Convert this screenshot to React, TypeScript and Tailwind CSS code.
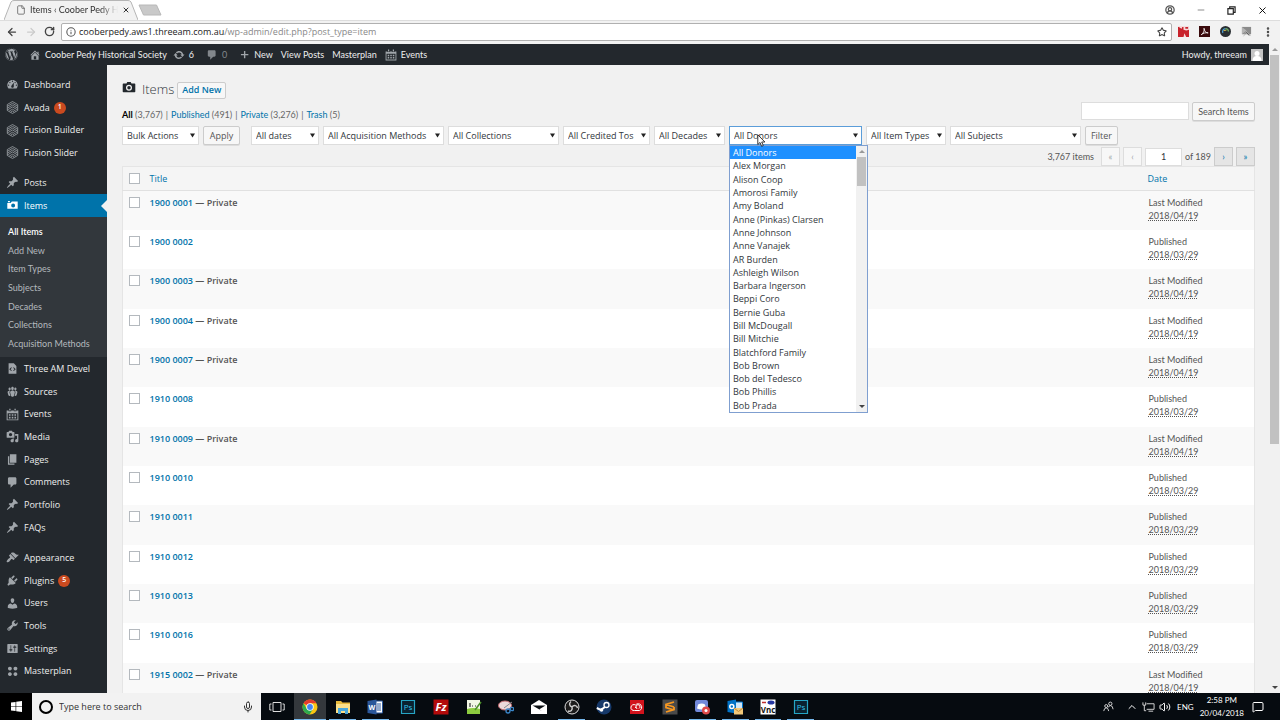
import React from 'react';
import clsx from 'clsx';
import { FaWordpress } from 'react-icons/fa';
import {
  ArrowLeft,
  ArrowRight,
  ChevronUp,
  CircleUserRound,
  File,
  Info,
  MessageSquare,
  Mic,
  Minus,
  MoreVertical,
  RotateCw,
  Star,
  Volume2,
  X,
} from 'lucide-react';

const ICONS = {
  home: 'M16 8.5l1.53 1.53-1.06 1.06L10 4.6l-6.47 6.49-1.06-1.06L10 2.5l4 4v-2h2v4zm-6-2.46l6 5.99V18H4v-5.97zM12 17v-5H8v5h4z',
  update:
    'M10.2 3.28c3.53 0 6.43 2.61 6.92 6h2.08l-3.5 4-3.5-4h2.32c-.45-1.97-2.21-3.45-4.32-3.45-1.45 0-2.73.71-3.54 1.78L4.95 5.66C6.23 4.2 8.11 3.28 10.2 3.28zm-.4 13.44c-3.52 0-6.43-2.61-6.92-6H.8l3.5-4c1.17 1.33 2.33 2.67 3.5 4H5.48c.45 1.97 2.21 3.45 4.32 3.45 1.45 0 2.73-.71 3.54-1.78l1.71 1.95c-1.28 1.46-3.15 2.38-5.25 2.38z',
  comments: 'M5 2h9c1.1 0 2 .9 2 2v7c0 1.1-.9 2-2 2h-2l-5 5v-5H5c-1.1 0-2-.9-2-2V4c0-1.1.9-2 2-2z',
  plus: 'M17 9v2.5h-5.5V17H9v-5.500H3.500V9H9V3.500h2.500V9z',
  calendar:
    'M5 1h2v3H5zM13 1h2v3h-2zM1 4h3v1h4V4h4v1h4V4h3v15H1zM2.500 8v9.500h15V8zM4.500 9.500h2.500V12H4.500zM8.800 9.500h2.500V12H8.800zM13 9.500h2.500V12H13zM4.500 13.500h2.500V16H4.500zM8.800 13.500h2.500V16H8.800zM13 13.500h2.500V16H13z',
  dashboard:
    'M3.76 16h12.48c1.1-1.37 1.76-3.11 1.76-5 0-4.42-3.58-8-8-8s-8 3.58-8 8c0 1.89.66 3.63 1.76 5zM10 4c.55 0 1 .45 1 1s-.45 1-1 1-1-.45-1-1 .45-1 1-1zM6 6c.55 0 1 .45 1 1s-.45 1-1 1-1-.45-1-1 .45-1 1-1zm8 0c.55 0 1 .45 1 1s-.45 1-1 1-1-.45-1-1 .45-1 1-1zm-5.37 5.55L12 7v6c0 1.100-.9 2-2 2s-2-.9-2-2c0-.57.24-1.080.63-1.450zM4 10c.55 0 1 .45 1 1s-.45 1-1 1-1-.45-1-1 .45-1 1-1zm12 0c.55 0 1 .45 1 1s-.45 1-1 1-1-.45-1-1 .45-1 1-1z',
  post: 'M10.44 3.02l1.82-1.82 6.36 6.35-1.83 1.82c-1.05-.68-2.48-.57-3.41.36l-.75.75c-.92.93-1.04 2.35-.35 3.41l-1.83 1.82-2.41-2.41-2.8 2.79c-.42.42-3.38 2.71-3.8 2.29s1.86-3.39 2.28-3.81l2.79-2.79L4.1 9.36l1.83-1.82c1.05.69 2.48.57 3.4-.36l.75-.75c.93-.92 1.05-2.35.36-3.41z',
  camera: 'M6 5V3H3v2h3zm12 10V4H9L7 6H2v9h16zm-7-8c1.650 0 3 1.350 3 3s-1.350 3-3 3-3-1.350-3-3 1.350-3 3-3z',
  dslr: 'M6.500 3.500L7.500 1.500h5l1 2H18a1 1 0 0 1 1 1V15a1 1 0 0 1-1 1H2a1 1 0 0 1-1-1V4.500a1 1 0 0 1 1-1zM10 5.200a4.300 4.300 0 1 0 0 8.600a4.300 4.300 0 1 0 0-8.600zM10 7a2.500 2.500 0 1 1 0 5a2.500 2.500 0 1 1 0-5z',
  code: 'M12 2l4 4v12H4V2h8zM9 13l-2-2 2-2-1-1-3 3 3 3zm3 1l3-3-3-3-1 1 2 2-2 2z',
  groups:
    'M8.03 4.46c-.29 1.28.55 3.46 1.97 3.46 1.41 0 2.25-2.18 1.96-3.46-.22-.98-1.08-1.63-1.96-1.63-.89 0-1.74.65-1.97 1.63zm-4.13.9c-.25 1.08.47 2.93 1.67 2.93s1.92-1.85 1.67-2.93c-.19-.83-.92-1.39-1.67-1.39s-1.48.56-1.67 1.39zm8.86 0c-.25 1.08.47 2.93 1.66 2.93 1.2 0 1.92-1.85 1.67-2.93-.19-.83-.92-1.39-1.67-1.39-.74 0-1.47.56-1.66 1.39zm-.59 11.43l1.25-4.3C14.2 10 12.71 8.47 10 8.47c-2.72 0-4.21 1.53-3.44 4.02l1.26 4.3C8.05 17.51 9 18 10 18c.98 0 1.94-.49 2.17-1.21zm-6.1-7.63c-.49.67-.96 1.83-.42 3.59l1.12 3.79c-.34.2-.77.31-1.2.31-.85 0-1.65-.41-1.85-1.03l-1.07-3.65c-.65-2.11.61-3.4 2.92-3.4.27 0 .54.02.79.06-.1.1-.2.22-.29.33zm8.35-.39c2.31 0 3.58 1.29 2.92 3.4l-1.07 3.65c-.2.62-1 1.03-1.85 1.03-.43 0-.86-.11-1.2-.31l1.11-3.77c.55-1.78.08-2.94-.42-3.61-.08-.11-.18-.23-.28-.33.25-.04.51-.06.79-.06z',
  media:
    'M13 11V4c0-.55-.45-1-1-1h-1.67L9 1H5L3.67 3H2c-.55 0-1 .45-1 1v7c0 .55.45 1 1 1h10c.55 0 1-.45 1-1zM7 4.500c1.380 0 2.500 1.120 2.500 2.500S8.380 9.500 7 9.500 4.500 8.380 4.500 7 5.620 4.500 7 4.500zM14 6h5v10.500c0 1.380-1.120 2.500-2.500 2.500S14 17.880 14 16.500s1.120-2.500 2.500-2.500c.17 0 .34.02.5.05V9h-3V6zm-4 8.050V13h2v3.500c0 1.380-1.120 2.500-2.500 2.500S7 17.880 7 16.500 8.120 14 9.500 14c.17 0 .34.02.5.05z',
  page: 'M6 15V2h10v13H6zm-1 1h8v2H3V5h2v11z',
  appearance:
    'M14.48 11.06L7.41 3.99l1.5-1.5c.5-.56 2.3-.47 3.51.32 1.21.8 1.43 1.28 2.91 2.1 1.18.64 2.45 1.26 4.45.85zm-.71.71L6.7 4.7 4.93 6.47c-.39.39-.39 1.02 0 1.41l1.06 1.06c.39.39.39 1.03 0 1.42-.6.6-1.43 1.11-2.21 1.69-.35.26-.7.53-1.01.84C1.43 14.23.4 16.08 1.4 17.07c.99 1 2.84-.03 4.18-1.36.31-.31.58-.66.85-1.02.57-.78 1.08-1.61 1.69-2.21.39-.39 1.02-.39 1.41 0l1.06 1.06c.39.39 1.02.39 1.41 0z',
  plugins:
    'M13.11 4.36L9.87 7.6 8 5.73l3.24-3.24c.35-.34 1.05-.2 1.56.32.52.51.66 1.21.31 1.55zm-8 1.77l.91-1.12 9.01 9.01-1.19.84c-.71.71-2.63 1.16-3.82 1.16H6.14L4.9 17.26c-.59.59-1.54.59-2.12 0-.59-.58-.59-1.53 0-2.12l1.24-1.24v-3.88c0-1.13.4-3.19 1.09-3.89zm7.26 3.97l3.24-3.24c.34-.35 1.04-.21 1.55.31.52.51.66 1.21.31 1.55l-3.24 3.25z',
  users:
    'M10 9.25c-2.27 0-2.73-3.44-2.73-3.44C7 4.02 7.82 2 9.97 2c2.16 0 2.98 2.02 2.71 3.81 0 0-.41 3.44-2.68 3.44zm0 2.57L12.72 10c2.39 0 4.52 2.33 4.52 4.53v2.49s-3.65 1.13-7.24 1.13c-3.65 0-7.24-1.13-7.24-1.13v-2.49c0-2.25 1.94-4.48 4.47-4.48z',
  tools:
    'M16.68 9.77c-1.34 1.34-3.3 1.67-4.95.99l-5.41 6.52c-.99.99-2.59.99-3.58 0s-.99-2.59 0-3.57l6.52-5.42c-.68-1.65-.35-3.61.99-4.95 1.28-1.28 3.12-1.62 4.72-1.06l-2.89 2.89 2.82 2.82 2.86-2.87c.53 1.58.18 3.39-1.08 4.65zM3.81 16.21c.4.39 1.04.39 1.43 0 .4-.4.4-1.04 0-1.43-.39-.4-1.03-.4-1.43 0-.39.39-.39 1.03 0 1.43z',
  settings:
    'M18 16V4c0-.55-.45-1-1-1H3c-.55 0-1 .45-1 1v12c0 .55.45 1 1 1h14c.55 0 1-.45 1-1zM8 11h1c.55 0 1 .45 1 1s-.45 1-1 1H8v1.500c0 .28-.22.5-.5.5s-.5-.22-.5-.5V13H6c-.55 0-1-.45-1-1s.45-1 1-1h1V5.500c0-.28.22-.5.5-.5s.5.22.5.5V11zm5-2h-1c-.55 0-1-.45-1-1s.45-1 1-1h1V5.500c0-.28.22-.5.5-.5s.5.22.5.5V7h1c.55 0 1 .45 1 1s-.45 1-1 1h-1v5.500c0 .28-.22.5-.5.5s-.5-.22-.5-.5V9z',
  masterplan:
    'M6 2.500a3 3 0 1 0 .01 0zM14.500 2.500a3 3 0 1 0 .01 0zM6 11a3 3 0 1 0 .01 0zM14.500 11a3 3 0 1 0 .01 0z',
};

type IconName = keyof typeof ICONS;

function DashIcon({ name, className = 'size-[13px]' }: { name: IconName; className?: string }) {
  return (
    <svg viewBox="0 0 20 20" className={clsx('shrink-0', className)} fill="currentColor" fillRule="evenodd" aria-hidden="true">
      <path d={ICONS[name]} />
    </svg>
  );
}

// Fusion logo: nested hexagon lines
function FusionIcon() {
  return (
    <svg viewBox="0 0 20 20" className="size-[13px] shrink-0" fill="none" stroke="currentColor" strokeWidth="1.2" aria-hidden="true">
      <path d="M10 .8l8 4.600v9.200l-8 4.600-8-4.600V5.400z" />
      <path d="M2 8.200l8-4.600 8 4.600M2 11l8-4.600 8 4.600M2 13.800l8-4.600 8 4.600M5 15.500l5-2.900 5 2.900M7.500 17l2.500-1.500 2.500 1.500" />
    </svg>
  );
}

interface MenuEntry {
  label: string;
  icon: IconName | 'fusion';
  badge?: number;
  current?: boolean;
}

const MENU_TOP: MenuEntry[] = [
  { label: 'Dashboard', icon: 'dashboard' },
  { label: 'Avada', icon: 'fusion', badge: 1 },
  { label: 'Fusion Builder', icon: 'fusion' },
  { label: 'Fusion Slider', icon: 'fusion' },
];

const MENU_POSTS: MenuEntry[] = [
  { label: 'Posts', icon: 'post' },
  { label: 'Items', icon: 'camera', current: true },
];

const SUBMENU = ['All Items', 'Add New', 'Item Types', 'Subjects', 'Decades', 'Collections', 'Acquisition Methods'];

const MENU_CONTENT: MenuEntry[] = [
  { label: 'Three AM Devel', icon: 'code' },
  { label: 'Sources', icon: 'groups' },
  { label: 'Events', icon: 'calendar' },
  { label: 'Media', icon: 'media' },
  { label: 'Pages', icon: 'page' },
  { label: 'Comments', icon: 'comments' },
  { label: 'Portfolio', icon: 'post' },
  { label: 'FAQs', icon: 'post' },
];

const MENU_ADMIN: MenuEntry[] = [
  { label: 'Appearance', icon: 'appearance' },
  { label: 'Plugins', icon: 'plugins', badge: 5 },
  { label: 'Users', icon: 'users' },
  { label: 'Tools', icon: 'tools' },
  { label: 'Settings', icon: 'settings' },
  { label: 'Masterplan', icon: 'masterplan' },
];

const DONORS = [
  'All Donors',
  'Alex Morgan',
  'Alison Coop',
  'Amorosi Family',
  'Amy Boland',
  'Anne (Pinkas) Clarsen',
  'Anne Johnson',
  'Anne Vanajek',
  'AR Burden',
  'Ashleigh Wilson',
  'Barbara Ingerson',
  'Beppi Coro',
  'Bernie Guba',
  'Bill McDougall',
  'Bill Mitchie',
  'Blatchford Family',
  'Bob Brown',
  'Bob del Tedesco',
  'Bob Phillis',
  'Bob Prada',
];

const ITEMS = [
  { title: '1900 0001', isPrivate: true },
  { title: '1900 0002', isPrivate: false },
  { title: '1900 0003', isPrivate: true },
  { title: '1900 0004', isPrivate: true },
  { title: '1900 0007', isPrivate: true },
  { title: '1910 0008', isPrivate: false },
  { title: '1910 0009', isPrivate: true },
  { title: '1910 0010', isPrivate: false },
  { title: '1910 0011', isPrivate: false },
  { title: '1910 0012', isPrivate: false },
  { title: '1910 0013', isPrivate: false },
  { title: '1910 0016', isPrivate: false },
  { title: '1915 0002', isPrivate: true },
];

// Narrower face for the secondary labels
const smallText = "font-['Lato'] text-[9px]";

function BrowserChrome() {
  return (
    <header className="shrink-0 bg-white text-[#333]">
      <div className="flex h-5 items-stretch pl-1">
        <div className="relative flex w-[134px] items-center gap-1 pl-3">
          <svg viewBox="0 0 134 20" preserveAspectRatio="none" className="absolute inset-0 size-full" aria-hidden="true">
            <path d="M0 20L7 2Q8 .5 10 .5H124Q126 .5 127 2L134 20" fill="#f2f2f2" stroke="#b5b5b5" />
          </svg>
          <File className="relative size-[10px] shrink-0 text-[#666]" strokeWidth={2} />
          <span className={clsx(smallText, 'relative w-[88px] shrink-0 whitespace-nowrap [mask-image:linear-gradient(to_right,black_80%,transparent)]')}>
            Items ‹ Coober Pedy Hist
          </span>
          <button type="button" aria-label="Close tab" className="relative">
            <X className="size-2" strokeWidth={3} />
          </button>
        </div>
        <button type="button" aria-label="New tab" className="flex items-center">
          <svg viewBox="0 0 24 12" className="h-3 w-6">
            <path d="M1 1H18.500L23 11H5.500Z" fill="#c9c9c9" stroke="#b8b8b8" />
          </svg>
        </button>
        <div className="ml-auto flex items-center gap-[21px] pr-3">
          <CircleUserRound className="size-[10px] text-[#555]" strokeWidth={3} />
          <button type="button" aria-label="Minimize">
            <Minus className="size-[10px] text-[#777]" />
          </button>
          <button type="button" aria-label="Restore">
            <svg viewBox="0 0 10 10" className="size-[9px]" fill="none" stroke="#222" strokeWidth="1.300">
              <path d="M1 3h6v6H1zM3 3V1h6v6H7" />
            </svg>
          </button>
          <button type="button" aria-label="Close">
            <X className="size-[11px] text-black" strokeWidth={2} />
          </button>
        </div>
      </div>
      <div className="flex h-6 items-center border-t border-[#ddd] bg-[#f2f2f2] pb-[2px] pl-[6px] pr-[6px]">
        <button type="button" aria-label="Back">
          <ArrowLeft className="size-3 text-[#444]" strokeWidth={2.5} />
        </button>
        <button type="button" aria-label="Forward" className="ml-[7px]">
          <ArrowRight className="size-3 text-[#ccc]" strokeWidth={2.5} />
        </button>
        <button type="button" aria-label="Reload" className="ml-[7px]">
          <RotateCw className="size-[11px] text-[#444]" strokeWidth={3} />
        </button>
        <div className="ml-[6px] flex h-[18px] min-w-0 flex-1 items-center rounded-xs border border-[#b0b0b0] bg-white px-1 text-[9px]">
          <Info className="size-[10px] shrink-0 text-[#555]" strokeWidth={2.5} />
          <span className="ml-[3px] flex-1 whitespace-nowrap text-[#222]">
            cooberpedy.aws1.threeam.com.au<span className="text-[#888]">/wp-admin/edit.php?post_type=item</span>
          </span>
          <button type="button" aria-label="Bookmark this page">
            <Star className="size-[10px] text-[#444]" strokeWidth={2.5} />
          </button>
        </div>
        <div className="ml-[6px] flex items-center gap-[10px]">
          <svg viewBox="0 0 12 12" className="size-[11px]" aria-hidden="true">
            <path d="M0 1h12v11H0z" fill="#c8232c" />
            <path d="M0 0h5L4 3 2 2zM6 0h2v3h3V0h1v4L9 5 6 4zM7 8l2 4H6z" fill="#f7dada" />
          </svg>
          <svg viewBox="0 0 12 12" className="size-[11px]" aria-hidden="true">
            <path d="M0 0h12v12H0z" fill="#3a0a0c" />
            <path d="M2.500 9.500C5 8 6 5 5.500 2.500C6 6 7.500 7.500 10 7.500C7 7 4.500 7.800 2.500 9.500Z" fill="none" stroke="#fff" strokeWidth=".9" />
          </svg>
          <svg viewBox="0 0 12 12" className="size-[11px]" aria-hidden="true">
            <circle cx="6" cy="6" r="6" fill="#2a2f33" />
            <path d="M3.200 7.500A3.200 3.200 0 0 1 6 2.800" fill="none" stroke="#4aa3df" strokeWidth="1.300" />
            <path d="M6 2.800A3.200 3.200 0 0 1 9.200 6" fill="none" stroke="#6fb36a" strokeWidth="1.300" />
            <path d="M4 5L7 4.500" stroke="#e8c94a" strokeWidth="1" />
          </svg>
          <svg viewBox="0 0 12 12" className="size-[11px]" aria-hidden="true">
            <path d="M1 1h10v8H1z" fill="#8b8b8b" />
            <path d="M1 1l5 4-5 4z" fill="#b5b5b5" />
            <path d="M2 12l4-6 5 5-3-1-2-2z" fill="#555" stroke="#eee" strokeWidth=".5" />
          </svg>
          <button type="button" aria-label="Menu">
            <MoreVertical className="size-3 text-[#444]" strokeWidth={3} />
          </button>
        </div>
      </div>
    </header>
  );
}

function AdminBar() {
  return (
    <nav className={clsx(smallText, 'flex h-[21px] shrink-0 items-center bg-[#23282d] pl-[5px] pr-[6px] text-[#eee]')} aria-label="Toolbar">
      <a href="#about" aria-label="About WordPress">
        <FaWordpress className="size-[13px] text-[#a0a5aa]" />
      </a>
      <a href="#site" className="ml-[11px] flex items-center gap-1 whitespace-nowrap">
        <DashIcon name="home" className="size-3 text-[#a0a5aa]" />
        Coober Pedy Historical Society
      </a>
      <a href="#updates" className="ml-[6px] flex items-center gap-1">
        <DashIcon name="update" className="size-3 text-[#a0a5aa]" />6
      </a>
      <a href="#comments" className="ml-3 flex items-center gap-1 text-[#82878c]">
        <DashIcon name="comments" className="size-3 text-[#82878c]" />0
      </a>
      <a href="#new" className="ml-3 flex items-center gap-1">
        <DashIcon name="plus" className="size-[11px] text-[#a0a5aa]" />
        New
      </a>
      <a href="#view" className="ml-2 whitespace-nowrap">View Posts</a>
      <a href="#masterplan" className="ml-2">Masterplan</a>
      <a href="#events" className="ml-2 flex items-center gap-1">
        <DashIcon name="calendar" className="size-3 text-[#a0a5aa]" />
        Events
      </a>
      <a href="#profile" className="ml-auto flex items-center gap-1 whitespace-nowrap">
        Howdy, threeam
        <svg viewBox="0 0 12 12" className="size-3" aria-hidden="true">
          <path d="M0 0h12v12H0z" fill="#c5c5c5" />
          <circle cx="6" cy="4.500" r="2.500" fill="#fff" />
          <path d="M1.500 12c0-4 2-5 4.500-5s4.500 1 4.500 5z" fill="#fff" />
        </svg>
      </a>
    </nav>
  );
}

function MenuGroup({ entries }: { entries: MenuEntry[] }) {
  return (
    <ul>
      {entries.map((entry) => (
        <li key={entry.label} className="h-[23px] nth-[3n]:h-[22px]">
          <a
            href={`#${entry.label}`}
            className={clsx(
              'relative flex h-full items-center gap-[5px] whitespace-nowrap pl-[6px]',
              entry.current ? 'bg-[#0073aa] text-white' : 'text-[#eee]',
            )}
          >
            <span className={entry.current ? 'text-white' : 'text-[#a0a5aa]'}>
              {entry.icon === 'fusion' ? <FusionIcon /> : <DashIcon name={entry.icon} />}
            </span>
            {entry.label}
            {entry.badge && (
              <span className="-ml-px flex size-3 items-center justify-center rounded-full bg-[#ca4a1f] text-[7px] font-semibold text-white">
                {entry.badge}
              </span>
            )}
            {entry.current && (
              <span className="absolute right-0 top-[6px] border-y-[6px] border-r-[6px] border-y-transparent border-r-[#f1f1f1]" />
            )}
          </a>
        </li>
      ))}
    </ul>
  );
}

function Sidebar() {
  return (
    <nav className="flex w-[107px] shrink-0 flex-col overflow-hidden bg-[#23282d] pt-2 text-[9px]" aria-label="Main menu">
      <MenuGroup entries={MENU_TOP} />
      <div className="mt-[7px]">
        <MenuGroup entries={MENU_POSTS} />
      </div>
      <ul className={clsx(smallText, 'bg-[#32373c] pb-1 pl-2 pt-[5px] text-[#b4b9be]')}>
        {SUBMENU.map((label, index) => (
          <li key={label} className="h-[19px] nth-[3n]:h-[18px]">
            <a href={`#${label}`} className={clsx('flex h-full items-center whitespace-nowrap', index === 0 && 'font-semibold text-white')}>
              {label}
            </a>
          </li>
        ))}
      </ul>
      <MenuGroup entries={MENU_CONTENT} />
      <div className="mt-[7px]">
        <MenuGroup entries={MENU_ADMIN} />
      </div>
    </nav>
  );
}

interface FilterSelectProps {
  label: string;
  className: string;
  focused?: boolean;
}

function FilterSelect({ label, className, focused }: FilterSelectProps) {
  return (
    <div className={clsx('relative shrink-0', className)}>
      <select
        aria-label={label}
        className={clsx(
          'block h-[19px] w-full appearance-none border bg-white pl-1 text-[9px] text-[#32373c] outline-none',
          focused ? 'border-[#5b9dd9]' : 'border-[#ddd]',
        )}
      >
        <option>{label}</option>
      </select>
      <svg viewBox="0 0 6 5" className="pointer-events-none absolute right-1 top-[7px] h-[5px] w-[5px]" aria-hidden="true">
        <path d="M0 0h6L3 5z" fill="#222" />
      </svg>
    </div>
  );
}

function DonorMenu() {
  return (
    <div className="absolute left-0 top-full z-10 flex h-[268px] w-[139px] border border-[#7f9fd0] bg-white text-[9px] leading-[13px] text-[#32373c]">
      <ul role="listbox" aria-label="Donors" className="flex flex-1 flex-col">
        {DONORS.map((donor, index) => (
          <li
            key={donor}
            role="option"
            aria-selected={index === 0}
            className={clsx('flex flex-1 items-center whitespace-nowrap pl-[3px]', index === 0 && 'bg-[#1e90ff] text-white')}
          >
            {donor}
          </li>
        ))}
      </ul>
      <div className="flex w-[11px] flex-col items-center justify-between bg-[#f1f1f1]">
        <div className="flex w-full flex-col items-center gap-1 pt-1">
          <span className="border-x-[3px] border-b-[3px] border-x-transparent border-b-[#999]" />
          <span className="h-[29px] w-[9px] bg-[#c1c1c1]" />
        </div>
        <span className="mb-1 border-x-[3px] border-t-[3px] border-x-transparent border-t-[#444]" />
      </div>
    </div>
  );
}

function MousePointer() {
  return (
    <svg viewBox="0 0 9 13" className="pointer-events-none absolute left-7 top-2 z-20 h-[13px] w-[9px]" aria-hidden="true">
      <path d="M.8 .8V10.500L3 8.500L4.600 12.300L6.300 11.500L4.700 8H7.900Z" fill="#fff" stroke="#222" strokeWidth=".9" />
    </svg>
  );
}

const buttonStyle = 'h-[19px] shrink-0 rounded-xs border border-[#ccc] bg-[#f7f7f7] text-[9px] text-[#555] shadow-[0_1px_0_#ddd]';

function Filters() {
  return (
    <div className="mt-[5px] flex items-center gap-1">
      <FilterSelect label="Bulk Actions" className="w-[77px]" />
      <button type="button" className={clsx(buttonStyle, 'mr-[7px] w-[37px]')}>Apply</button>
      <FilterSelect label="All dates" className="w-[68px]" />
      <FilterSelect label="All Acquisition Methods" className="w-[121px]" />
      <FilterSelect label="All Collections" className="w-[111px]" />
      <FilterSelect label="All Credited Tos" className="w-[87px]" />
      <FilterSelect label="All Decades" className="w-[71px]" />
      <div className="relative">
        <FilterSelect label="All Donors" className="w-[133px]" focused />
        <DonorMenu />
        <MousePointer />
      </div>
      <FilterSelect label="All Item Types" className="w-[80px]" />
      <FilterSelect label="All Subjects" className="w-[131px]" />
      <button type="button" className={clsx(buttonStyle, 'w-[33px]')}>Filter</button>
    </div>
  );
}

function Pagination() {
  const page = 'size-[19px] shrink-0 border leading-none';
  return (
    <div className={clsx(smallText, 'mt-[2px] flex items-center justify-end gap-[3px] text-[#555]')}>
      <span className="mr-1">3,767 items</span>
      <button type="button" disabled aria-label="First page" className={clsx(page, 'border-[#ddd] bg-[#f7f7f7] text-[#a0a5aa]')}>«</button>
      <button type="button" disabled aria-label="Previous page" className={clsx(page, 'border-[#ddd] bg-[#f7f7f7] text-[#a0a5aa]')}>‹</button>
      <input
        type="text"
        aria-label="Current page"
        defaultValue="1"
        className="h-[18px] w-[37px] border border-[#ddd] bg-white text-center text-[#32373c]"
      />
      <span>of 189</span>
      <button type="button" aria-label="Next page" className={clsx(page, 'border-[#ccc] bg-[#e5e5e5] text-[#0073aa]')}>›</button>
      <button type="button" aria-label="Last page" className={clsx(page, 'border-[#ccc] bg-[#e5e5e5] text-[#0073aa]')}>»</button>
    </div>
  );
}

const checkboxStyle = 'block size-[11px] appearance-none border border-[#b4b9be] bg-white';

function ItemsTable() {
  return (
    <table className="w-full table-fixed border-collapse border border-[#e5e5e5] bg-white text-left text-[9px] leading-[13px] text-[#555]">
      <thead>
        <tr className="h-6 border-b border-[#e1e1e1] bg-[#f5f5f5] text-[#0073aa]">
          <th className="w-[27px] pl-[6px] align-middle">
            <input type="checkbox" aria-label="Select all" className={checkboxStyle} />
          </th>
          <th className="font-normal">
            <a href="#title">Title</a>
          </th>
          <th className="w-[107px] font-normal">
            <a href="#date">Date</a>
          </th>
        </tr>
      </thead>
      <tbody>
        {ITEMS.map((item) => (
          <tr key={item.title} className="h-[39px] align-top odd:bg-[#f9f9f9] nth-[3n]:h-10">
            <td className="pl-[6px] pt-[6px]">
              <input type="checkbox" aria-label={`Select ${item.title}`} className={checkboxStyle} />
            </td>
            <td className="pt-[5px] font-semibold">
              <a href={`#${item.title}`} className="text-[#0073aa]">{item.title}</a>
              {item.isPrivate && ' — Private'}
            </td>
            <td className={clsx(smallText, 'pl-px pt-[5px]')}>
              {item.isPrivate ? 'Last Modified' : 'Published'}
              <br />
              <abbr className="underline decoration-dotted">{item.isPrivate ? '2018/04/19' : '2018/03/29'}</abbr>
            </td>
          </tr>
        ))}
      </tbody>
    </table>
  );
}

function StatusLinks() {
  const views = [
    ['Published', '491'],
    ['Private', '3,276'],
    ['Trash', '5'],
  ];
  return (
    <div className={clsx(smallText, 'flex gap-[3px] whitespace-nowrap text-[#666]')}>
      <span>
        <a href="#all" className="font-bold text-black">All</a> (3,767)
      </span>
      {views.map(([name, count]) => (
        <React.Fragment key={name}>
          <span>|</span>
          <span>
            <a href={`#${name}`} className="text-[#0073aa]">{name}</a> ({count})
          </span>
        </React.Fragment>
      ))}
    </div>
  );
}

function ItemsPage() {
  return (
    <main className="min-w-0 flex-1 overflow-hidden pl-[15px] pr-[14px] pt-[14px]">
      <div className="flex h-[22px] items-center">
        <DashIcon name="dslr" className="-mt-1 size-[14px] text-[#23282d]" />
        <h1 className="ml-[6px] text-[13px] font-light text-[#32373c]">Items</h1>
        <a href="#add" className="ml-[3px] flex h-[17px] items-center rounded-xs border border-[#ccc] bg-[#f7f7f7] px-1 text-[9px] font-semibold text-[#0073aa]">
          Add New
        </a>
      </div>
      <div className="flex h-5 items-end justify-between">
        <StatusLinks />
        <form className="flex gap-[3px]" onSubmit={(event) => event.preventDefault()}>
          <input type="text" aria-label="Search Items" className="h-[18px] w-[108px] border border-[#ddd] bg-white px-1 text-[9px]" />
          <button type="submit" className={clsx(buttonStyle, smallText, 'w-[63px]')}>Search Items</button>
        </form>
      </div>
      <Filters />
      <Pagination />
      <ItemsTable />
    </main>
  );
}

function PageScrollbar() {
  return (
    <div className="flex w-[11px] shrink-0 flex-col items-center bg-[#f1f1f1]" aria-hidden="true">
      <span className="mt-1 border-x-[3px] border-b-[3px] border-x-transparent border-b-[#999]" />
      <span className="mt-1 h-3/5 w-[9px] bg-[#c1c1c1]" />
      <span className="mb-1 mt-auto border-x-[3px] border-t-[3px] border-x-transparent border-t-[#444]" />
    </div>
  );
}

interface TaskbarApp {
  name: string;
  open?: boolean;
  active?: boolean;
  icon: React.ReactNode;
}

const photoshop = (
  <>
    <path d="M1.500 1.500h13v13h-13z" fill="#0a2230" stroke="#26a5c4" strokeWidth="1.200" />
    <text x="8" y="11" textAnchor="middle" fontSize="8" fill="#35c3ea">Ps</text>
  </>
);

const APPS: TaskbarApp[] = [
  {
    name: 'Task view',
    icon: <path d="M4 3.500h8v9H4zM2.500 5H.8v6h1.700M13.500 5h1.700v6h-1.700" fill="none" stroke="#ddd" />,
  },
  {
    name: 'Chrome',
    open: true,
    active: true,
    icon: (
      <>
        <circle cx="8" cy="8" r="7.500" fill="#f9c513" />
        <path d="M8 8L1.500 4.200A7.500 7.500 0 0 1 14.500 4.200H8z" fill="#e33b2e" />
        <path d="M1.500 4.200A7.500 7.500 0 0 0 7.500 15.500L11 10 8 8 4.800 10z" fill="#2da94f" />
        <circle cx="8" cy="8" r="3.700" fill="#fff" />
        <circle cx="8" cy="8" r="2.900" fill="#4285f4" />
      </>
    ),
  },
  {
    name: 'File Explorer',
    open: true,
    icon: (
      <>
        <path d="M1 2h5l1.500 1.500H15V14H1z" fill="#e8b93c" />
        <path d="M1 5h14v9H1z" fill="#fbe08a" />
        <path d="M3 15V9h10v6h-3v-3H6v3z" fill="#4aa8dc" />
      </>
    ),
  },
  {
    name: 'Word',
    open: true,
    icon: (
      <>
        <path d="M8 2h7.500v12H8z" fill="#fff" stroke="#2b579a" />
        <path d="M10 5h4M10 7h4M10 9h4M10 11h4" stroke="#2b579a" />
        <path d="M.5 2L9.500 .5v15L.5 14z" fill="#2b579a" />
        <text x="5" y="11" textAnchor="middle" fontSize="7" fontWeight="700" fill="#fff">W</text>
      </>
    ),
  },
  { name: 'Photoshop', icon: photoshop },
  {
    name: 'FileZilla',
    icon: (
      <>
        <path d="M.5 .5h15v15H.5z" fill="#b30b0b" />
        <text x="8" y="12" textAnchor="middle" fontSize="11" fontWeight="700" fontStyle="italic" fill="#fff">Fz</text>
      </>
    ),
  },
  {
    name: 'Notepad++',
    icon: (
      <>
        <path d="M1 1h13v14H1z" fill="#f1f6e4" />
        <path d="M1 10q6-2 13 0v5H1z" fill="#8ccb3f" />
        <path d="M4 4v4M6 7h1M9 7h1" stroke="#333" strokeWidth="1.200" />
        <path d="M9 11L15 3" stroke="#4c8f2a" strokeWidth="1.600" />
      </>
    ),
  },
  {
    name: 'Snipping Tool',
    icon: (
      <>
        <ellipse cx="7" cy="6.500" rx="6.500" ry="4.500" fill="#ecd9da" stroke="#c4666c" />
        <path d="M6 9l8-6" stroke="#888" />
        <circle cx="10" cy="12" r="2" fill="none" stroke="#3a86c8" strokeWidth="1.300" />
        <circle cx="14" cy="10" r="1.700" fill="none" stroke="#3a86c8" strokeWidth="1.300" />
      </>
    ),
  },
  {
    name: 'Mail',
    icon: (
      <>
        <path d="M0 6L8 1l8 5v9H0z" fill="#fff" />
        <path d="M1.500 6.500h13L8 10.500l3 1.500z" fill="#0b0f13" />
      </>
    ),
  },
  {
    name: 'OBS',
    open: true,
    icon: (
      <>
        <circle cx="8" cy="8" r="7" fill="#1c1c1c" stroke="#ddd" />
        <path d="M8 8C5 7 5 4 7 2.500M8 8c2-2.500 5-1.500 5.500 1M8 8c1 3-1.500 5-4 4" fill="none" stroke="#ccc" strokeWidth="1.500" />
      </>
    ),
  },
  {
    name: 'Steam',
    icon: (
      <>
        <circle cx="8" cy="8" r="7.500" fill="#16396a" />
        <circle cx="10.500" cy="6" r="2.500" fill="#16396a" stroke="#fff" strokeWidth="1.300" />
        <path d="M.8 9l4 1.800L9 8" fill="none" stroke="#fff" strokeWidth="2" />
        <circle cx="5.500" cy="11" r="1.800" fill="#fff" />
      </>
    ),
  },
  {
    name: 'Creative Cloud',
    icon: (
      <>
        <path d="M1 1h14v14H1z" fill="#d1131c" />
        <path d="M5.500 11.500a3 3 0 1 1 1-5.500a3.500 3.500 0 1 1 4 5.500zM8 9.500a2 2 0 1 1 2 0M8 9.500L6 8" fill="none" stroke="#fff" strokeWidth="1" />
      </>
    ),
  },
  {
    name: 'Sublime Text',
    icon: (
      <>
        <path d="M.5 .5h15v15H.5z" fill="#4a4a4a" />
        <path d="M12 3L4 5.500v3L12 11M12 8L4 5.500M4 13l8-2.500V8" fill="none" stroke="#f89820" strokeWidth="1.800" />
      </>
    ),
  },
  {
    name: 'Discord',
    open: true,
    icon: (
      <>
        <path d="M3 1h9q2 0 2 2v12l-3-2H3q-2 0-2-2V3q0-2 2-2z" fill="#7289da" />
        <path d="M4 5.500q4-2 7 0l1 4q-4 2-9 0z" fill="#fff" />
        <circle cx="12" cy="11.500" r="4" fill="#e04b4b" />
        <circle cx="12" cy="11.500" r="1.500" fill="#fff" />
      </>
    ),
  },
  {
    name: 'Outlook',
    open: true,
    icon: (
      <>
        <path d="M8 3h7.500v7H8z" fill="#cfe6f7" stroke="#0072c6" />
        <path d="M.5 2L9 .5v14L.5 13z" fill="#0072c6" />
        <circle cx="4.800" cy="7.500" r="2" fill="none" stroke="#fff" strokeWidth="1.500" />
        <path d="M7 9h9v6.500H7z" fill="#f2c879" />
        <path d="M7 9l4.500 3.500L16 9" fill="none" stroke="#b8863a" />
      </>
    ),
  },
  {
    name: 'VNC',
    open: true,
    icon: (
      <>
        <path d="M.5 .5h15v15H.5z" fill="#fff" />
        <path d="M2 3.500h4" stroke="#c03030" strokeWidth="1.500" />
        <ellipse cx="11" cy="3.500" rx="3.500" ry="2" fill="#2436a0" />
        <text x="8" y="13.500" textAnchor="middle" fontSize="8" fontWeight="700" fill="#111">Vnc</text>
      </>
    ),
  },
  { name: 'Photoshop document', open: true, icon: photoshop },
];

function Taskbar() {
  return (
    <footer className="flex h-[27px] shrink-0 items-stretch bg-[#060b10] text-white">
      <button type="button" aria-label="Start" className="flex w-8 items-center justify-center bg-black">
        <svg viewBox="0 0 12 12" className="size-[11px]" fill="#fff">
          <path d="M0 1.700L5 1v4.700H0zM5.700.9L12 0v5.700H5.700zM0 6.300h5V11l-5-.7zM5.700 6.300H12V12l-6.300-.9z" />
        </svg>
      </button>
      <label className="flex w-[229px] items-center bg-[#f2f2f2] px-[7px] text-[#333]">
        <span className="size-[14px] shrink-0 rounded-full border-2 border-black" />
        <input
          type="search"
          aria-label="Search"
          placeholder="Type here to search"
          className="ml-[6px] min-w-0 flex-1 bg-transparent text-[9px] outline-none placeholder:text-[#333]"
        />
        <Mic className="size-3" strokeWidth={2} />
      </label>
      <div className="flex w-[556px]">
        {APPS.map((app) => (
          <button
            key={app.name}
            type="button"
            aria-label={app.name}
            className={clsx('relative flex flex-1 items-center justify-center', app.active && 'bg-[#34383c]')}
          >
            <svg viewBox="0 0 16 16" className="size-4">
              {app.icon}
            </svg>
            {app.open && (
              <span className={clsx('absolute bottom-0 h-px bg-[#76b9ed]', app.active ? 'inset-x-0' : 'inset-x-[3px]')} />
            )}
          </button>
        ))}
      </div>
      <div className="ml-auto flex items-center font-['Lato'] text-[8px]">
        <svg viewBox="0 0 12 12" className="size-[11px]" fill="none" stroke="#ddd" aria-hidden="true">
          <circle cx="8" cy="3" r="1.800" />
          <circle cx="3.500" cy="5.500" r="1.600" />
          <path d="M.8 11q.5-3.500 2.700-3.500T6.200 11M5.800 7q.8-2 2.200-2 2.700 0 3 4" />
        </svg>
        <ChevronUp className="ml-3 size-3" />
        <svg viewBox="0 0 14 12" className="ml-1 h-3 w-[13px]" fill="none" stroke="#ddd" aria-hidden="true">
          <path d="M5 2.500h8v6H5M7 10.500h5M1 1v3h3V1M2.500 4v6h2" />
        </svg>
        <Volume2 className="ml-1 size-3" />
        <span className="ml-[6px]">ENG</span>
        <span className="ml-[6px] flex flex-col items-center leading-[13px]">
          <span>2:58 PM</span>
          <span>20/04/2018</span>
        </span>
        <MessageSquare className="ml-2 mr-4 size-3" />
      </div>
    </footer>
  );
}

export default function App() {
  return (
    <div className="flex h-screen flex-col overflow-hidden bg-[#f1f1f1] font-['Open_Sans','Noto_Sans',sans-serif]">
      <BrowserChrome />
      <div className="flex min-h-0 flex-1">
        <div className="flex min-w-0 flex-1 flex-col">
          <AdminBar />
          <div className="flex min-h-0 flex-1">
            <Sidebar />
            <ItemsPage />
          </div>
        </div>
        <PageScrollbar />
      </div>
      <Taskbar />
    </div>
  );
}
